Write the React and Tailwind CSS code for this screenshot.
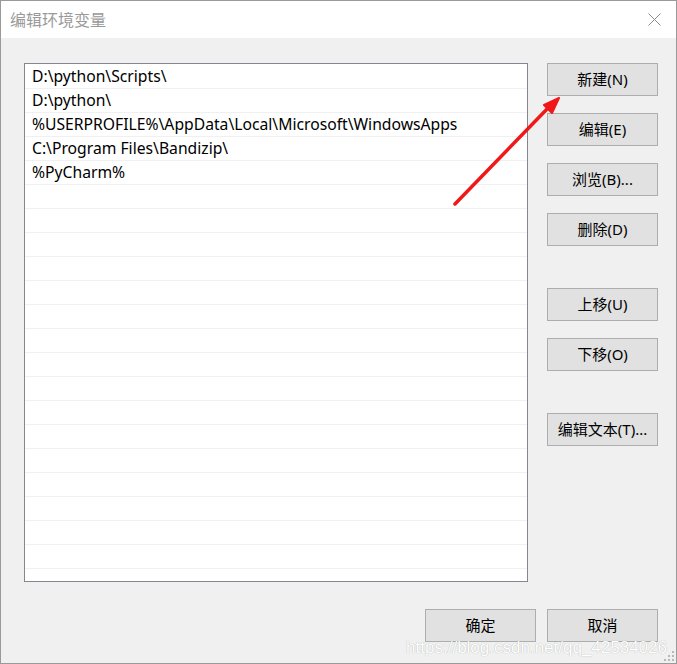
import React from 'react';

const paths = [
    'D:\\python\\Scripts\\',
    'D:\\python\\',
    '%USERPROFILE%\\AppData\\Local\\Microsoft\\WindowsApps',
    'C:\\Program Files\\Bandizip\\',
    '%PyCharm%',
];

const font = { fontFamily: '"Noto Sans", "Noto Sans CJK SC", sans-serif' };

const WinButton = ({ label, className = '' }) => (
    <button
        className={`w-[111px] h-[33px] bg-[#e1e1e1] border border-[#adadad] text-[15px] text-black leading-none ${className}`}
    >
        {label}
    </button>
);

const App = () => {
    const rows = Array.from({ length: 22 }, (_, i) => paths[i] || '');

    return (
        <div className="relative w-[677px] h-[664px] overflow-hidden bg-[#f0f0f0] border border-[#9a9a9a]" style={font}>
            {/* title bar */}
            <div className="h-[37px] bg-white flex items-center justify-between pl-[9px] pr-[14px]">
                <span className="text-[16px] text-[#9a9a9a]">编辑环境变量</span>
                <svg width="13" height="13" viewBox="0 0 13 13" className="mr-[1px]">
                    <path d="M0.5 0.5 L12.5 12.5 M12.5 0.5 L0.5 12.5" stroke="#8a8a8a" strokeWidth="1" />
                </svg>
            </div>

            <div className="flex pl-[23px] pt-[25px]">
                {/* path list */}
                <div className="w-[504px] h-[519px] bg-white border border-[#828790] pt-[1px] overflow-hidden">
                    {rows.map((p, i) => (
                        <div key={i} className="h-[24px] border-b border-[#f0f0f0] pl-[7px] pt-[1px] flex items-center text-[15.7px] text-black whitespace-nowrap">
                            {p}
                        </div>
                    ))}
                </div>

                {/* action buttons */}
                <div className="ml-[19px] flex flex-col">
                    <WinButton label="新建(N)" />
                    <WinButton label="编辑(E)" className="mt-[17px]" />
                    <WinButton label="浏览(B)..." className="mt-[17px]" />
                    <WinButton label="删除(D)" className="mt-[17px]" />
                    <WinButton label="上移(U)" className="mt-[42px]" />
                    <WinButton label="下移(O)" className="mt-[17px]" />
                    <WinButton label="编辑文本(T)..." className="mt-[42px]" />
                </div>
            </div>

            {/* bottom buttons */}
            <div className="flex justify-end gap-[11px] pr-[18px] mt-[27px]">
                <WinButton label="确定" />
                <WinButton label="取消" />
            </div>

            {/* red annotation arrow */}
            <svg className="absolute left-0 top-0 pointer-events-none" width="677" height="664">
                <line x1="454" y1="203" x2="548" y2="106" stroke="#f01818" strokeWidth="3.5" strokeLinecap="round" />
                <polygon points="558,97 543,104 551,112" fill="#f01818" stroke="#f01818" strokeWidth="2" strokeLinejoin="round" />
            </svg>

            {/* watermark */}
            <div
                className="absolute right-[9px] bottom-[3px] text-[17px] text-white pointer-events-none"
                style={{ fontFamily: '"Liberation Sans", Arial, sans-serif', textShadow: '0 0 1px rgba(0,0,0,0.35)' }}
            >
                https://blog.csdn.net/qq_42534026
            </div>

            {/* resize grip */}
            <svg className="absolute right-[2px] bottom-[2px]" width="10" height="10">
                {[[8, 0], [8, 4], [4, 4], [8, 8], [4, 8], [0, 8]].map(([x, y], i) => (
                    <rect key={i} x={x} y={y} width="2" height="2" fill="#b8b8b8" />
                ))}
            </svg>
        </div>
    );
};

export default App;
